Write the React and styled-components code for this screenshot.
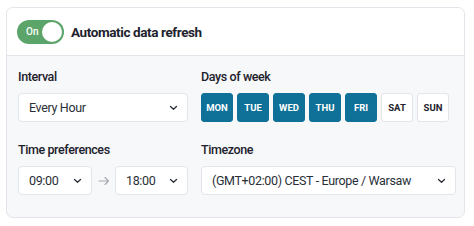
import React from 'react';
import styled, { createGlobalStyle } from 'styled-components';

const green = '#5ba56b';
const blue = '#0f7197';
const text = '#1d222c';
const line = '#e2e5ea';

const Global = createGlobalStyle`
    body {
        margin: 0;
        background: #ffffff;
        font-family: Roboto, 'Noto Sans', sans-serif;
        color: ${text};
    }
`;

const Card = styled.div`
    margin: 7px 0 0 6px;
    width: 459px;
    height: 211px;
    box-sizing: border-box;
    border: 1px solid ${line};
    border-radius: 7px;
    background: #f7f8fa;
    overflow: hidden;
    display: flex;
    flex-direction: column;
`;

const Header = styled.div`
    height: 48px;
    box-sizing: border-box;
    background: #ffffff;
    border-bottom: 1px solid ${line};
    display: flex;
    align-items: center;
    gap: 7px;
    padding: 0 10px;
`;

const Toggle = styled.div`
    width: 47px;
    height: 24px;
    border-radius: 12px;
    background: ${green};
    display: flex;
    align-items: center;
    justify-content: space-between;
    padding: 0 2px 0 9px;
    box-sizing: border-box;
    color: #ffffff;
    font-size: 10px;
    font-weight: 500;
`;

const Knob = styled.span`
    width: 20px;
    height: 20px;
    border-radius: 50%;
    background: #ffffff;
`;

const Title = styled.div`
    font-size: 13.5px;
    font-weight: 700;
    letter-spacing: -0.4px;
`;

const Body = styled.div`
    display: grid;
    grid-template-columns: 170px 1fr;
    column-gap: 13px;
    row-gap: 20px;
    padding: 13px 8px 0 11px;
`;

const Field = styled.div`
    display: flex;
    flex-direction: column;
    gap: 8px;
`;

const Label = styled.div`
    font-size: 12.5px;
    font-weight: 500;
    line-height: 16px;
    letter-spacing: -0.4px;
`;

const Select = styled.div`
    height: 29px;
    width: ${props => props.width || '100%'};
    box-sizing: border-box;
    background: #ffffff;
    border: 1px solid ${line};
    border-radius: 4px;
    display: flex;
    align-items: center;
    justify-content: space-between;
    padding: 0 9px 0 10px;
    font-size: 12.5px;
    letter-spacing: -0.35px;
    color: #2a2f38;
    white-space: nowrap;
`;

const Days = styled.div`
    display: flex;
    gap: 4px;
`;

const Day = styled.div`
    width: 32px;
    height: 29px;
    box-sizing: border-box;
    border-radius: 3px;
    display: flex;
    align-items: center;
    justify-content: center;
    font-size: 9.5px;
    font-weight: 700;
    background: ${props => (props.active ? blue : '#ffffff')};
    color: ${props => (props.active ? '#ffffff' : text)};
    border: 1px solid ${props => (props.active ? blue : line)};
`;

const TimeRow = styled.div`
    display: flex;
    align-items: center;
    justify-content: space-between;
`;

const Chevron = () => (
    <svg width="9" height="6" viewBox="0 0 9 6" fill="none">
        <path d="M1.5 1.5 L4.5 4.3 L7.5 1.5" stroke="#2a2f38" strokeWidth="1.3" strokeLinecap="round" strokeLinejoin="round" />
    </svg>
);

const ArrowIcon = () => (
    <svg width="12" height="10" viewBox="0 0 12 10" fill="none">
        <path d="M1 5 H10.5 M7 1.5 L10.5 5 L7 8.5" stroke="#a3a8b0" strokeWidth="1.1" strokeLinecap="round" strokeLinejoin="round" />
    </svg>
);

const days = [
    { name: 'MON', active: true },
    { name: 'TUE', active: true },
    { name: 'WED', active: true },
    { name: 'THU', active: true },
    { name: 'FRI', active: true },
    { name: 'SAT', active: false },
    { name: 'SUN', active: false },
];

export default function App() {
    return (
        <>
            <Global />
            <Card>
                <Header>
                    <Toggle>
                        On
                        <Knob />
                    </Toggle>
                    <Title>Automatic data refresh</Title>
                </Header>
                <Body>
                    <Field>
                        <Label>Interval</Label>
                        <Select>
                            Every Hour
                            <Chevron />
                        </Select>
                    </Field>
                    <Field>
                        <Label>Days of week</Label>
                        <Days>
                            {days.map(d => (
                                <Day key={d.name} active={d.active}>{d.name}</Day>
                            ))}
                        </Days>
                    </Field>
                    <Field>
                        <Label>Time preferences</Label>
                        <TimeRow>
                            <Select width="74px">
                                09:00
                                <Chevron />
                            </Select>
                            <ArrowIcon />
                            <Select width="73px">
                                18:00
                                <Chevron />
                            </Select>
                        </TimeRow>
                    </Field>
                    <Field>
                        <Label>Timezone</Label>
                        <Select>
                            (GMT+02:00) CEST - Europe / Warsaw
                            <Chevron />
                        </Select>
                    </Field>
                </Body>
            </Card>
        </>
    );
}
